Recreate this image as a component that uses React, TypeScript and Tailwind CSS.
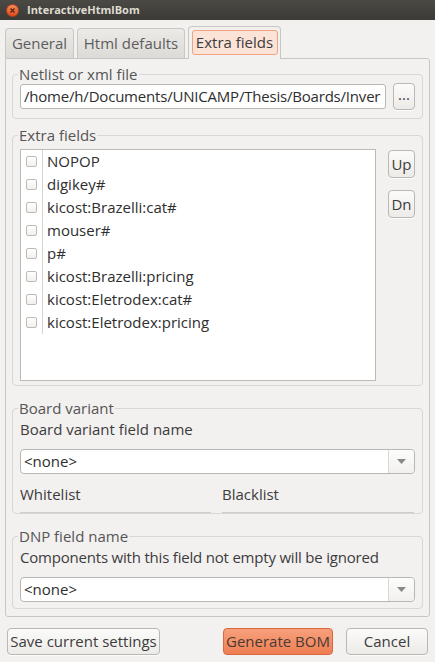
import React from 'react'

const fields = [
  'NOPOP',
  'digikey#',
  'kicost:Brazelli:cat#',
  'mouser#',
  'p#',
  'kicost:Brazelli:pricing',
  'kicost:Eletrodex:cat#',
  'kicost:Eletrodex:pricing',
]

function Group({ label, className, children }: { label: string; className?: string; children: React.ReactNode }) {
  return (
    <fieldset className={`rounded-[4px] border border-[#d9d7d2] px-[7px] ${className ?? ''}`}>
      <legend className="-ml-[2px] px-[1px] text-[15px] leading-[16px] text-[#555]">{label}</legend>
      {children}
    </fieldset>
  )
}

function Button({ children, className }: { children: React.ReactNode; className?: string }) {
  return (
    <button
      className={`flex items-center justify-center rounded-[4px] border border-[#bab8b4] bg-gradient-to-b from-[#fbfbfa] to-[#edebe8] text-[15px] text-[#3c3c3c] shadow-[0_1px_0_rgba(255,255,255,0.8)] ${className ?? ''}`}
    >
      {children}
    </button>
  )
}

function Combo() {
  return (
    <div className="flex h-[25px] w-[395px] rounded-[4px] border border-[#b9b7b3] bg-white">
      <div className="flex flex-1 items-center pl-[3px] text-[15px] text-[#2e2e2e]">&lt;none&gt;</div>
      <div className="flex w-[26px] items-center justify-center rounded-r-[4px] border-l border-[#dad8d4] bg-gradient-to-b from-[#fdfdfc] to-[#f1f0ee]">
        <svg width="9" height="5" viewBox="0 0 9 5">
          <path d="M0 0 H9 L4.5 5 Z" fill="#8a8986" />
        </svg>
      </div>
    </div>
  )
}

export default function App() {
  return (
    <div className="flex h-[662px] w-[435px] flex-col bg-[#f2f1f0] font-['Open_Sans','Noto_Sans',sans-serif] text-[#3c3c3c]">
      {/* window title bar */}
      <div className="flex h-[20px] items-center bg-gradient-to-b from-[#4a4944] to-[#3b3a36] pl-[6px]">
        <div className="flex h-[13px] w-[13px] items-center justify-center rounded-full border border-[#b8421c] bg-gradient-to-b from-[#f48a5c] to-[#df4a1a]">
          <svg width="7" height="7" viewBox="0 0 7 7">
            <path d="M1.5 1.5 L5.5 5.5 M5.5 1.5 L1.5 5.5" stroke="#5a2410" strokeWidth="1.3" />
          </svg>
        </div>
        <span className="ml-[8px] text-[11px] font-bold text-[#dfdbd2]">InteractiveHtmlBom</span>
      </div>

      {/* tabs */}
      <div className="flex items-end pl-[5px] pt-[6px]">
        <div className="mr-[3px] flex h-[30px] w-[69px] items-center justify-center rounded-t-[4px] border border-b-0 border-[#c9c7c3] bg-gradient-to-b from-[#eceae7] to-[#dddbd7] text-[15px] text-[#5d5d5d]">
          General
        </div>
        <div className="mr-[3px] flex h-[30px] w-[108px] items-center justify-center rounded-t-[4px] border border-b-0 border-[#c9c7c3] bg-gradient-to-b from-[#eceae7] to-[#dddbd7] text-[15px] text-[#5d5d5d]">
          Html defaults
        </div>
        <div className="relative z-10 -mb-px flex h-[33px] w-[93px] items-start justify-center rounded-t-[4px] border border-b-0 border-[#c9c7c3] bg-[#f2f1f0] pt-[3px]">
          <div className="flex h-[25px] w-[86px] items-center justify-center rounded-[3px] border border-[#f0a281] bg-[#fbe3d8] text-[15px] text-[#3c3c3c]">
            Extra fields
          </div>
        </div>
      </div>

      {/* notebook page */}
      <div className="mx-[5px] flex w-[425px] flex-col rounded-b-[3px] rounded-tr-[3px] border border-[#c9c7c3] px-[6px] pb-[7px] pt-[7px]">
        <Group label="Netlist or xml file" className="pb-[8px]">
          <div className="mt-[1px] flex items-center">
            <div className="flex h-[25px] w-[366px] items-center overflow-hidden whitespace-nowrap rounded-[3px] border border-[#b9b7b3] bg-white pl-[3px] text-[15px] tracking-[-0.2px] text-[#2e2e2e]">
              /home/h/Documents/UNICAMP/Thesis/Boards/Inver
            </div>
            <Button className="ml-[7px] h-[27px] w-[22px] pb-[4px]">...</Button>
          </div>
        </Group>

        <Group label="Extra fields" className="mt-[8px] pb-[4px]">
          <div className="mt-[6px] flex">
            <div className="h-[232px] w-[356px] border border-[#bdbbb7] bg-white">
              <div className="flex flex-col">
                {fields.map((f) => (
                  <div key={f} className="flex h-[23px] items-center">
                    <div className="flex w-[21px] justify-center">
                      <div className="h-[11px] w-[11px] rounded-[2px] border border-[#bdbbb7] bg-gradient-to-b from-white to-[#f1f0ee]" />
                    </div>
                    <div className="h-full w-px bg-[#d6d4d0]" />
                    <span className="pl-[4px] text-[15px] text-[#2e2e2e]">{f}</span>
                  </div>
                ))}
              </div>
            </div>
            <div className="ml-[12px] flex flex-col pt-[1px]">
              <Button className="h-[28px] w-[27px]">Up</Button>
              <Button className="mt-[12px] h-[28px] w-[27px]">Dn</Button>
            </div>
          </div>
        </Group>

        <Group label="Board variant" className="mt-[14px]">
          <div className="mt-[3px] text-[15px] leading-[20px] text-[#3c3c3c]">Board variant field name</div>
          <div className="mt-[10px]">
            <Combo />
          </div>
          <div className="mt-[10px] flex text-[15px] leading-[20px]">
            <span className="w-[202px]">Whitelist</span>
            <span>Blacklist</span>
          </div>
          <div className="mt-[8px] flex">
            <div className="h-[1px] w-[191px] bg-[#cfcdc9]" />
            <div className="ml-[11px] h-[1px] w-[192px] bg-[#cfcdc9]" />
          </div>
        </Group>

        <Group label="DNP field name" className="mt-[14px] pb-[6px]">
          <div className="mt-[3px] text-[15px] leading-[20px] tracking-[-0.2px]">Components with this field not empty will be ignored</div>
          <div className="mt-[10px]">
            <Combo />
          </div>
        </Group>
      </div>

      {/* dialog buttons */}
      <div className="mt-[11px] flex items-center px-[7px]">
        <Button className="h-[27px] w-[153px]">Save current settings</Button>
        <button className="ml-[63px] flex h-[27px] w-[110px] items-center justify-center rounded-[4px] border border-[#d9683e] bg-gradient-to-b from-[#f6a07c] to-[#ef7e53] text-[15px] text-[#4a3a34]">
          Generate BOM
        </button>
        <Button className="ml-[13px] h-[27px] w-[82px]">Cancel</Button>
      </div>
    </div>
  )
}
